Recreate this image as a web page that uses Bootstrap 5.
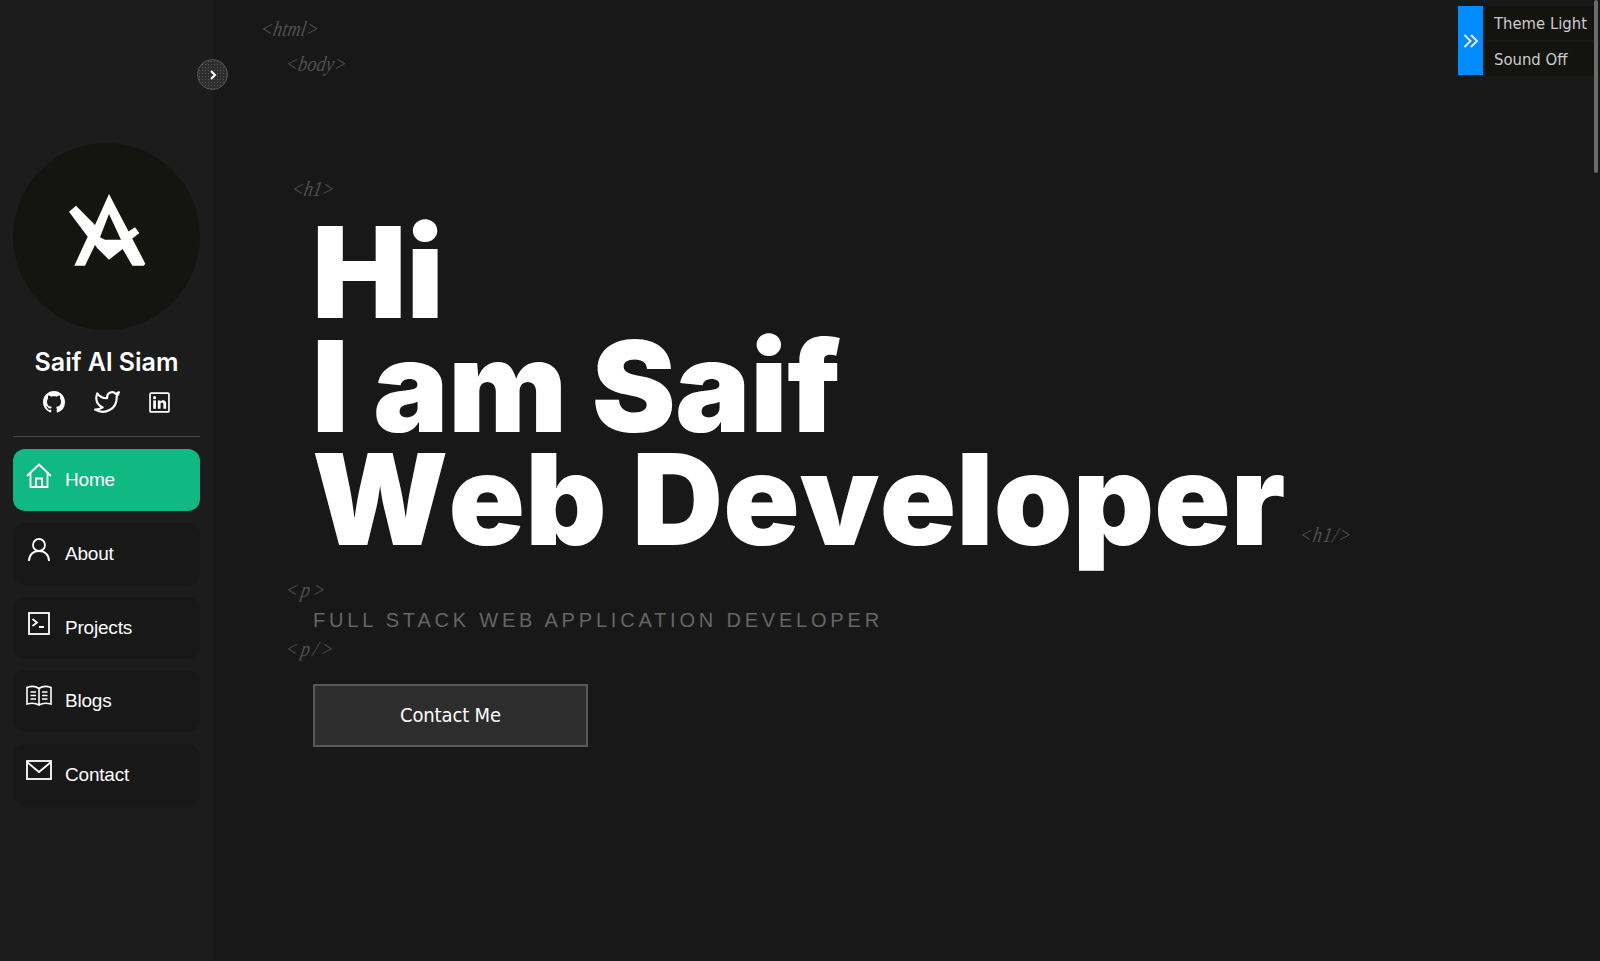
<!DOCTYPE html>
<html lang="en">
<head>
  <meta charset="UTF-8">
  <title>Saif Al Siam</title>
  <meta name="viewport" content="width=device-width, initial-scale=1">
  <link href="https://cdn.jsdelivr.net/npm/bootstrap@5.3.0/dist/css/bootstrap.min.css" rel="stylesheet">
  <style>
    html, body { height: 100%; overflow: hidden; }
    body { background-color: #181818; color: #fff; font-family: "Liberation Sans", sans-serif; }
    .side-panel { width: 213px; height: 961px; background-color: #1c1c1c; padding: 143px 13px 0; flex-shrink: 0; position: relative; }
    .toggle-btn { position: absolute; left: 197px; top: 59px; width: 31px; height: 31px; border-radius: 50%; background-color: #2e2e2e; background-image: radial-gradient(#555 .6px, transparent .8px); background-size: 3px 3px; border: 1px solid #555; z-index: 3; }
    .avatar-disc { width: 187px; height: 187px; border-radius: 50%; background-color: #141411; }
    .avatar-disc svg { margin: 0 0 15px 6px; }
    .owner-name { font-family: Inter, sans-serif; font-weight: 600; font-size: 25px; line-height: 29px; margin: 18px 0 0; }
    .social-row { gap: 29px; margin-top: 13px; height: 24px; }
    .side-rule { height: 1px; background-color: #494949; margin-top: 22px; margin-bottom: 12px; }
    .side-link { height: 62px; border-radius: 12px; background-color: #181818; color: #fff; font-size: 19px; margin-bottom: 11.8px; padding: 12px 0 0 13px; text-decoration: none; letter-spacing: -.2px; }
    .side-link.is-active { background-color: #10b981; }
    .side-link svg { width: 26px; height: 26px; flex-shrink: 0; margin: 2px 13px 0 0; }
    .side-link span { padding-top: 8px; line-height: 22px; }
    .main-area { padding-top: 17px; position: relative; }
    .code-tag { display: block; width: max-content; font-family: "Liberation Serif", serif; font-style: italic; font-size: 18px; line-height: 24px; color: #505050; font-weight: 400; transform: skewX(-10deg) scaleY(1.2); transform-origin: left center; }
    .tag-html { margin-left: 48px; letter-spacing: .3px; }
    .tag-body { margin-left: 73px; margin-top: 11px; letter-spacing: .3px; }
    .tag-h1 { margin-left: 79px; margin-top: 101px; }
    .tag-h1-end { display: inline-block; font-size: 18px; letter-spacing: 1px; margin-left: 14px; vertical-align: 4px; }
    .hero-title { font-family: Inter, sans-serif; font-weight: 900; font-size: 126px; line-height: 113.5px; font-kerning: none; margin: 15px 0 0 99px; white-space: nowrap; color: #fff; }
    .hero-mid { letter-spacing: -.25px; }
    .hero-last { letter-spacing: .2px; }
    .tag-p { margin-left: 73px; margin-top: 21px; letter-spacing: 3px; }
    .tag-p-end { margin-left: 73px; margin-top: 0; letter-spacing: 3px; }
    .hero-sub { font-size: 20px; line-height: 24px; letter-spacing: 3.8px; color: #666; margin: 6px 0 5px 100px; }
    .contact-btn { display: block; width: 275px; height: 63px; margin: 23px 0 0 100px; background-color: #2d2d2d; border: 2px solid #595959; border-radius: 0; color: #fff; font-family: "DejaVu Sans Condensed", "DejaVu Sans", sans-serif; font-stretch: condensed; font-size: 20px; letter-spacing: -.15px; }
    .contact-btn:hover { background-color: #2d2d2d; color: #fff; border-color: #595959; }
    .theme-panel { position: absolute; right: 6px; top: 6px; z-index: 3; }
    .theme-arrow { width: 25px; height: 69px; background-color: #008cff; margin-right: 3px; }
    .theme-opts { width: 108px; gap: 2px; }
    .theme-opt { height: 34px; background-color: #131310; color: #ccc; font-family: "DejaVu Sans Condensed", "DejaVu Sans", sans-serif; font-stretch: condensed; font-size: 16.5px; line-height: 36px; padding-left: 8px; white-space: nowrap; border-radius: 3px 0 0 3px; }
    .fake-scroll { position: absolute; right: 2px; top: 0; width: 4px; height: 173px; background-color: #6b6b6b; border-radius: 2px; z-index: 4; }
  </style>
</head>
<body>

<div class="d-flex">
  <aside class="side-panel">
    <button class="toggle-btn d-flex align-items-center justify-content-center p-0" type="button" aria-label="Toggle sidebar">
      <svg width="12" height="12" viewBox="0 0 12 12" fill="none" stroke="#fff" stroke-width="2"><path d="M4 2l4 4-4 4"/></svg>
    </button>

    <div class="avatar-disc d-flex align-items-center justify-content-center">
      <svg width="140" height="120" viewBox="0 0 420 360" fill="#fff" fill-rule="evenodd">
        <path d="M207 75L316 284L311 290H277L248 240L207 272L172 238L165 228L135 290H103L143 203L87 128L108 110L165 168ZM207 135L180 205L195 212H243Z"/>
        <path d="M262 190L285 175L298 192L265 218Z"/>
      </svg>
    </div>

    <h2 class="owner-name text-center">Saif Al Siam</h2>

    <div class="social-row d-flex justify-content-center align-items-center">
      <svg width="22" height="22" viewBox="0 0 16 16" fill="#fff"><path d="M8 0C3.58 0 0 3.58 0 8c0 3.54 2.29 6.53 5.47 7.59.4.07.55-.17.55-.38 0-.19-.01-.82-.01-1.49-2.01.37-2.53-.49-2.69-.94-.09-.23-.48-.94-.82-1.13-.28-.15-.68-.52-.01-.53.63-.01 1.08.58 1.23.82.72 1.21 1.87.87 2.33.66.07-.52.28-.87.51-1.07-1.78-.2-3.64-.89-3.64-3.95 0-.87.31-1.59.82-2.15-.08-.2-.36-1.02.08-2.12 0 0 .67-.21 2.2.82.64-.18 1.32-.27 2-.27.68 0 1.36.09 2 .27 1.53-1.04 2.2-.82 2.2-.82.44 1.1.16 1.92.08 2.12.51.56.82 1.27.82 2.15 0 3.07-1.87 3.75-3.65 3.95.29.25.54.73.54 1.48 0 1.07-.01 1.93-.01 2.2 0 .21.15.46.55.38A8.012 8.012 0 0 0 16 8c0-4.42-3.58-8-8-8z"/></svg>
      <svg width="26" height="26" viewBox="0 0 24 24" fill="none" stroke="#fff" stroke-width="2" stroke-linejoin="round" stroke-linecap="round"><path d="M23 3a10.9 10.9 0 0 1-3 1.53 4.48 4.48 0 0 0-7.86 3v1A10.66 10.66 0 0 1 3 4s-4 9 5 13a11.64 11.64 0 0 1-7 2c9 5 20 0 20-11.5a4.5 4.5 0 0 0-.08-.83A7.72 7.72 0 0 0 23 3z"/></svg>
      <svg width="21" height="21" viewBox="0 0 20 20" fill="#fff"><rect x="1" y="1" width="18" height="18" rx="1" fill="none" stroke="#fff" stroke-width="1.6"/><rect x="4" y="8" width="2.6" height="8"/><circle cx="5.3" cy="5.4" r="1.5"/><path d="M8.4 8h2.5v1.2c.5-.9 1.4-1.4 2.5-1.4 2 0 2.9 1.3 2.9 3.4V16h-2.6v-4.3c0-1-.4-1.7-1.3-1.7s-1.4.7-1.4 1.7V16H8.4z"/></svg>
    </div>

    <div class="side-rule"></div>

    <nav>
      <a class="side-link is-active d-flex" href="#">
        <svg viewBox="0 0 26 26" fill="none" stroke="#fff" stroke-width="1.8"><path d="M1 13L13 1.5L25 13M4.5 10.5V24H21.5V10.5M10 24V15.5H16V24"/></svg>
        <span>Home</span>
      </a>
      <a class="side-link d-flex" href="#">
        <svg viewBox="0 0 26 26" fill="none" stroke="#fff" stroke-width="1.8"><circle cx="13" cy="8" r="6"/><path d="M3 24c0-6 4-10 10-10s10 4 10 10"/></svg>
        <span>About</span>
      </a>
      <a class="side-link d-flex" href="#">
        <svg viewBox="0 0 26 26" fill="none" stroke="#fff" stroke-width="1.8"><rect x="3" y="2" width="20" height="21"/><path d="M6.5 8l4.5 3.5L6.5 15M13 16h5"/></svg>
        <span>Projects</span>
      </a>
      <a class="side-link d-flex" href="#">
        <svg viewBox="0 0 26 26" fill="none" stroke="#fff" stroke-width="1.6"><path d="M1 3.500C5 2 9.500 2 13 4.500C16.500 2 21 2 25 3.500V20C21 19 16.500 19 13 21C9.500 19 5 19 1 20ZM13 4.500V21M4.500 8H10M4.500 11.500H10M4.500 15H10M16 8H21.500M16 11.500H21.500M16 15H21.500"/></svg>
        <span>Blogs</span>
      </a>
      <a class="side-link d-flex" href="#">
        <svg viewBox="0 0 26 26" fill="none" stroke="#fff" stroke-width="1.8"><rect x="1" y="3" width="24" height="18"/><path d="M1 4l12 10L25 4"/></svg>
        <span>Contact</span>
      </a>
    </nav>
  </aside>

  <main class="main-area flex-grow-1">
    <span class="code-tag tag-html">&lt;html&gt;</span>
    <span class="code-tag tag-body">&lt;body&gt;</span>
    <span class="code-tag tag-h1">&lt;h1&gt;</span>
    <h1 class="hero-title">Hi<br><span class="hero-mid">I am Saif</span><br><span class="hero-last">Web Developer</span><span class="code-tag tag-h1-end">&lt;h1/&gt;</span></h1>
    <span class="code-tag tag-p">&lt;p&gt;</span>
    <p class="hero-sub">FULL STACK WEB APPLICATION DEVELOPER</p>
    <span class="code-tag tag-p-end">&lt;p/&gt;</span>
    <button class="btn contact-btn" type="button">Contact Me</button>

    <div class="theme-panel d-flex">
      <div class="theme-arrow d-flex align-items-center justify-content-center">
        <svg width="16" height="16" viewBox="0 0 16 16" fill="none" stroke="#e8e8e8" stroke-width="2"><path d="M1.500 2l6 6-6 6M8 2l6 6-6 6"/></svg>
      </div>
      <div class="theme-opts d-flex flex-column">
        <div class="theme-opt">Theme Light</div>
        <div class="theme-opt">Sound Off</div>
      </div>
    </div>
    <div class="fake-scroll"></div>
  </main>
</div>

</body>
</html>
